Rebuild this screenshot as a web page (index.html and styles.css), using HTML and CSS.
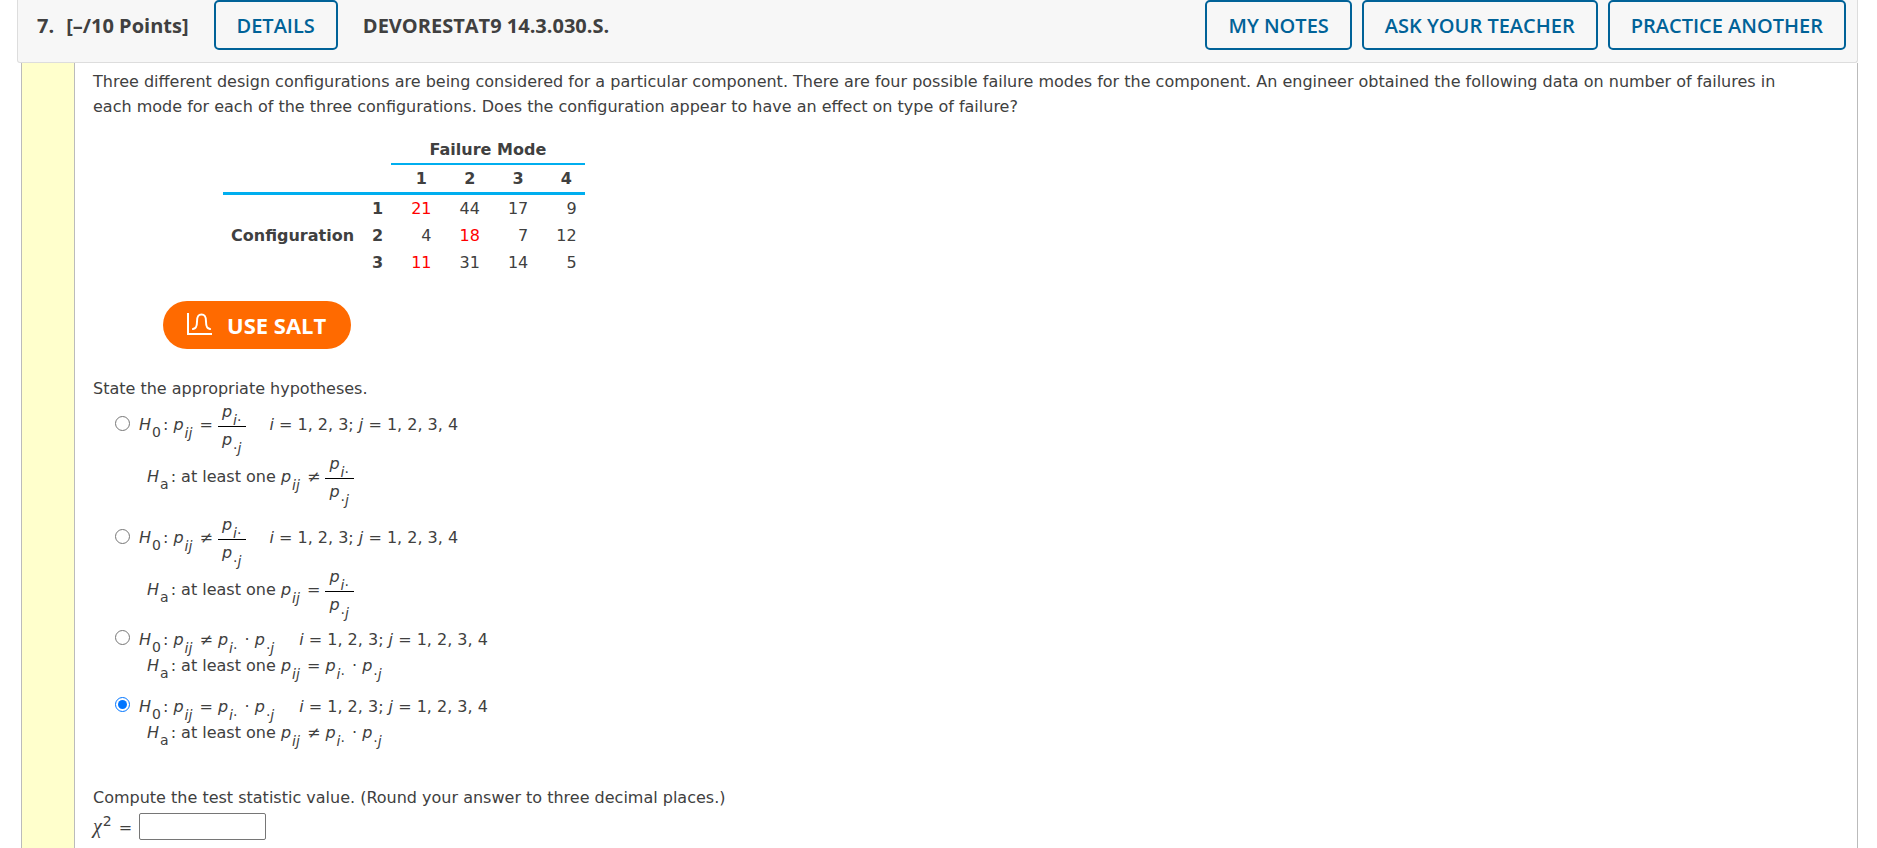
FILE: index.html
```html
<!DOCTYPE html>
<html lang="en">
<head>
    <meta charset="UTF-8">
    <meta name="viewport" content="width=device-width, initial-scale=1.0">
    <title>Question 7</title>
    <link rel="stylesheet" href="styles.css">
</head>
<body>
    <div class="question">
        <header class="question-header">
            <span class="number">7.</span>
            <span class="points">[–/10 Points]</span>
            <button type="button" class="header-button details">DETAILS</button>
            <span class="source">DEVORESTAT9 14.3.030.S.</span>
            <div class="actions">
                <button type="button" class="header-button">MY NOTES</button>
                <button type="button" class="header-button">ASK YOUR TEACHER</button>
                <button type="button" class="header-button">PRACTICE ANOTHER</button>
            </div>
        </header>
        <main class="question-body">
            <div class="content">
                <p>Three different design configurations are being considered for a particular component. There are four possible failure modes for the component. An engineer obtained the following data on number of failures in each mode for each of the three configurations. Does the configuration appear to have an effect on type of failure?</p>

                <table class="data-table">
                    <thead>
                        <tr>
                            <td colspan="2"></td>
                            <th colspan="4" class="group">Failure Mode</th>
                        </tr>
                        <tr class="columns">
                            <td colspan="2"></td>
                            <th>1</th>
                            <th>2</th>
                            <th>3</th>
                            <th>4</th>
                        </tr>
                    </thead>
                    <tbody>
                        <tr>
                            <th rowspan="3">Configuration</th>
                            <th class="row-number">1</th>
                            <td class="random">21</td>
                            <td>44</td>
                            <td>17</td>
                            <td>9</td>
                        </tr>
                        <tr>
                            <th class="row-number">2</th>
                            <td>4</td>
                            <td class="random">18</td>
                            <td>7</td>
                            <td>12</td>
                        </tr>
                        <tr>
                            <th class="row-number">3</th>
                            <td class="random">11</td>
                            <td>31</td>
                            <td>14</td>
                            <td>5</td>
                        </tr>
                    </tbody>
                </table>

                <button type="button" class="salt-button">
                    <svg width="26" height="24" viewBox="0 0 26 24" fill="none" stroke="#fff" stroke-width="2" aria-hidden="true">
                        <path d="M1 0v21H25"/>
                        <path stroke-linecap="round" d="M6 16c3.500-.5 4-3 4-7.500 0-5 1-7 4.500-7s4.500 2 4.500 7c0 4.500 .5 7 4 7.500"/>
                    </svg>
                    USE SALT
                </button>

                <p>State the appropriate hypotheses.</p>
                <div class="options">
                    <div class="option fractions">
                        <input type="radio" name="hypotheses" id="option1">
                        <label for="option1">
                            <span class="line"><i>H</i><sub>0</sub>: <i>p</i><sub class="low"><i>ij</i></sub> = <span class="fraction"><span class="top"><i>p</i><sub class="low"><i>i</i>·</sub></span><span class="bottom"><i>p</i><sub class="low">·<i>j</i></sub></span></span><span class="range"><i>i</i> = 1, 2, 3; <i>j</i> = 1, 2, 3, 4</span></span>
                            <span class="line alternative"><i>H</i><sub>a</sub>: at least one <i>p</i><sub class="low"><i>ij</i></sub> ≠ <span class="fraction"><span class="top"><i>p</i><sub class="low"><i>i</i>·</sub></span><span class="bottom"><i>p</i><sub class="low">·<i>j</i></sub></span></span></span>
                        </label>
                    </div>
                    <div class="option fractions">
                        <input type="radio" name="hypotheses" id="option2">
                        <label for="option2">
                            <span class="line"><i>H</i><sub>0</sub>: <i>p</i><sub class="low"><i>ij</i></sub> ≠ <span class="fraction"><span class="top"><i>p</i><sub class="low"><i>i</i>·</sub></span><span class="bottom"><i>p</i><sub class="low">·<i>j</i></sub></span></span><span class="range"><i>i</i> = 1, 2, 3; <i>j</i> = 1, 2, 3, 4</span></span>
                            <span class="line alternative"><i>H</i><sub>a</sub>: at least one <i>p</i><sub class="low"><i>ij</i></sub> = <span class="fraction"><span class="top"><i>p</i><sub class="low"><i>i</i>·</sub></span><span class="bottom"><i>p</i><sub class="low">·<i>j</i></sub></span></span></span>
                        </label>
                    </div>
                    <div class="option">
                        <input type="radio" name="hypotheses" id="option3">
                        <label for="option3">
                            <span class="line"><i>H</i><sub>0</sub>: <i>p</i><sub class="low"><i>ij</i></sub> ≠ <i>p</i><sub class="low"><i>i</i>·</sub> · <i>p</i><sub class="low">·<i>j</i></sub><span class="range"><i>i</i> = 1, 2, 3; <i>j</i> = 1, 2, 3, 4</span></span>
                            <span class="line alternative"><i>H</i><sub>a</sub>: at least one <i>p</i><sub class="low"><i>ij</i></sub> = <i>p</i><sub class="low"><i>i</i>·</sub> · <i>p</i><sub class="low">·<i>j</i></sub></span>
                        </label>
                    </div>
                    <div class="option">
                        <input type="radio" name="hypotheses" id="option4" checked>
                        <label for="option4">
                            <span class="line"><i>H</i><sub>0</sub>: <i>p</i><sub class="low"><i>ij</i></sub> = <i>p</i><sub class="low"><i>i</i>·</sub> · <i>p</i><sub class="low">·<i>j</i></sub><span class="range"><i>i</i> = 1, 2, 3; <i>j</i> = 1, 2, 3, 4</span></span>
                            <span class="line alternative"><i>H</i><sub>a</sub>: at least one <i>p</i><sub class="low"><i>ij</i></sub> ≠ <i>p</i><sub class="low"><i>i</i>·</sub> · <i>p</i><sub class="low">·<i>j</i></sub></span>
                        </label>
                    </div>
                </div>

                <p>Compute the test statistic value. (Round your answer to three decimal places.)</p>
                <div class="answer">
                    <label for="statistic"><span class="chi">χ</span><sup>2</sup> =</label>
                    <input type="text" id="statistic" name="statistic">
                </div>
            </div>
        </main>
    </div>
</body>
</html>
```
FILE: styles.css
```css
* {
    box-sizing: border-box;
}
body {
    margin: 0;
    background-color: #fff;
    color: #404040;
    font-family: Verdana, "DejaVu Sans", sans-serif;
    font-size: 16px;
    line-height: 25px;
}
p {
    margin: 0;
}
.question {
    display: flex;
    flex-direction: column;
    min-height: 100vh;
    margin: 0 19px 0 17px;
}
.question-header {
    display: flex;
    align-items: center;
    padding: 0 11px 12px 19px;
    background-color: #f7f7f7;
    border: 1px solid #ddd;
    border-top: none;
    border-radius: 0 0 3px 3px;
    font-family: "Open Sans", sans-serif;
    font-size: 20px;
    font-weight: 700;
}
.points {
    margin-left: 12px;
}
.header-button {
    height: 50px;
    padding: 0 21px;
    background-color: transparent;
    border: 2px solid #006298;
    border-radius: 5px;
    color: #006298;
    font-family: inherit;
    font-size: 20px;
    font-weight: 600;
    cursor: pointer;
}
.details {
    margin: 0 25px;
}
.actions {
    display: flex;
    gap: 10px;
    margin-left: auto;
}
.question-body {
    display: flex;
    flex: 1;
    margin-left: 4px;
    padding-left: 52px;
    background: linear-gradient(#ffc, #ffc) left / 52px 100% no-repeat;
    border-left: 1px solid #bbb;
    border-right: 1px solid #bbb;
}
.content {
    flex: 1;
    padding: 6px 48px 0 18px;
    border-left: 1px solid #bbb;
}
.data-table {
    margin: 17px 0 25px 130px;
    border-collapse: separate;
    border-spacing: 0;
    text-align: right;
}
.data-table th,
.data-table td {
    padding: 1px 8px;
}
.data-table td,
.data-table .columns th {
    padding-left: 20px;
}
.data-table .row-number {
    padding-left: 10px;
}
.data-table .group {
    border-bottom: 2px solid #00aeef;
    text-align: center;
}
.data-table .columns th,
.data-table .columns td {
    border-bottom: 3px solid #00aeef;
}
.data-table .columns th {
    text-align: center;
}
.data-table .random {
    color: #f00;
}
.salt-button {
    display: flex;
    align-items: center;
    gap: 14px;
    height: 48px;
    margin: 0 0 27px 70px;
    padding: 0 25px 0 24px;
    background-color: #ff6a00;
    border: none;
    border-radius: 24px;
    color: #fff;
    font-family: "Open Sans", sans-serif;
    font-size: 22px;
    font-weight: 700;
    cursor: pointer;
}
.options {
    margin: 0 0 39px 22px;
}
.option {
    display: flex;
    align-items: flex-start;
    gap: 9px;
    padding-bottom: 15px;
    line-height: 26px;
}
.option:last-child {
    padding-bottom: 0;
}
.option input {
    width: 15px;
    height: 15px;
    margin: 3px 0 0;
}
.fractions {
    padding-bottom: 9px;
}
.fractions input {
    margin-top: 15px;
}
.line {
    display: block;
}
.alternative {
    padding-left: 8px;
}
sub,
sup {
    padding: 0 2px 0 1px;
    font-size: 14px;
    line-height: 0;
}
sub {
    vertical-align: -7px;
}
.low {
    vertical-align: -8px;
}
.fraction {
    display: inline-block;
    vertical-align: -15px;
}
.top,
.bottom {
    display: block;
    height: 26px;
    padding: 0 3px 0 4px;
}
.top {
    border-bottom: 1px solid #000;
    line-height: 22px;
}
.bottom {
    line-height: 25px;
}
.range {
    margin-left: 23px;
}
.answer {
    display: flex;
    align-items: center;
    gap: 7px;
    margin-top: 3px;
}
.answer input {
    width: 127px;
    height: 27px;
    border: 1px solid #767676;
    border-radius: 2px;
    font: inherit;
}
.chi {
    font-family: "Liberation Serif", serif;
    font-size: 20px;
    font-style: italic;
}
```
